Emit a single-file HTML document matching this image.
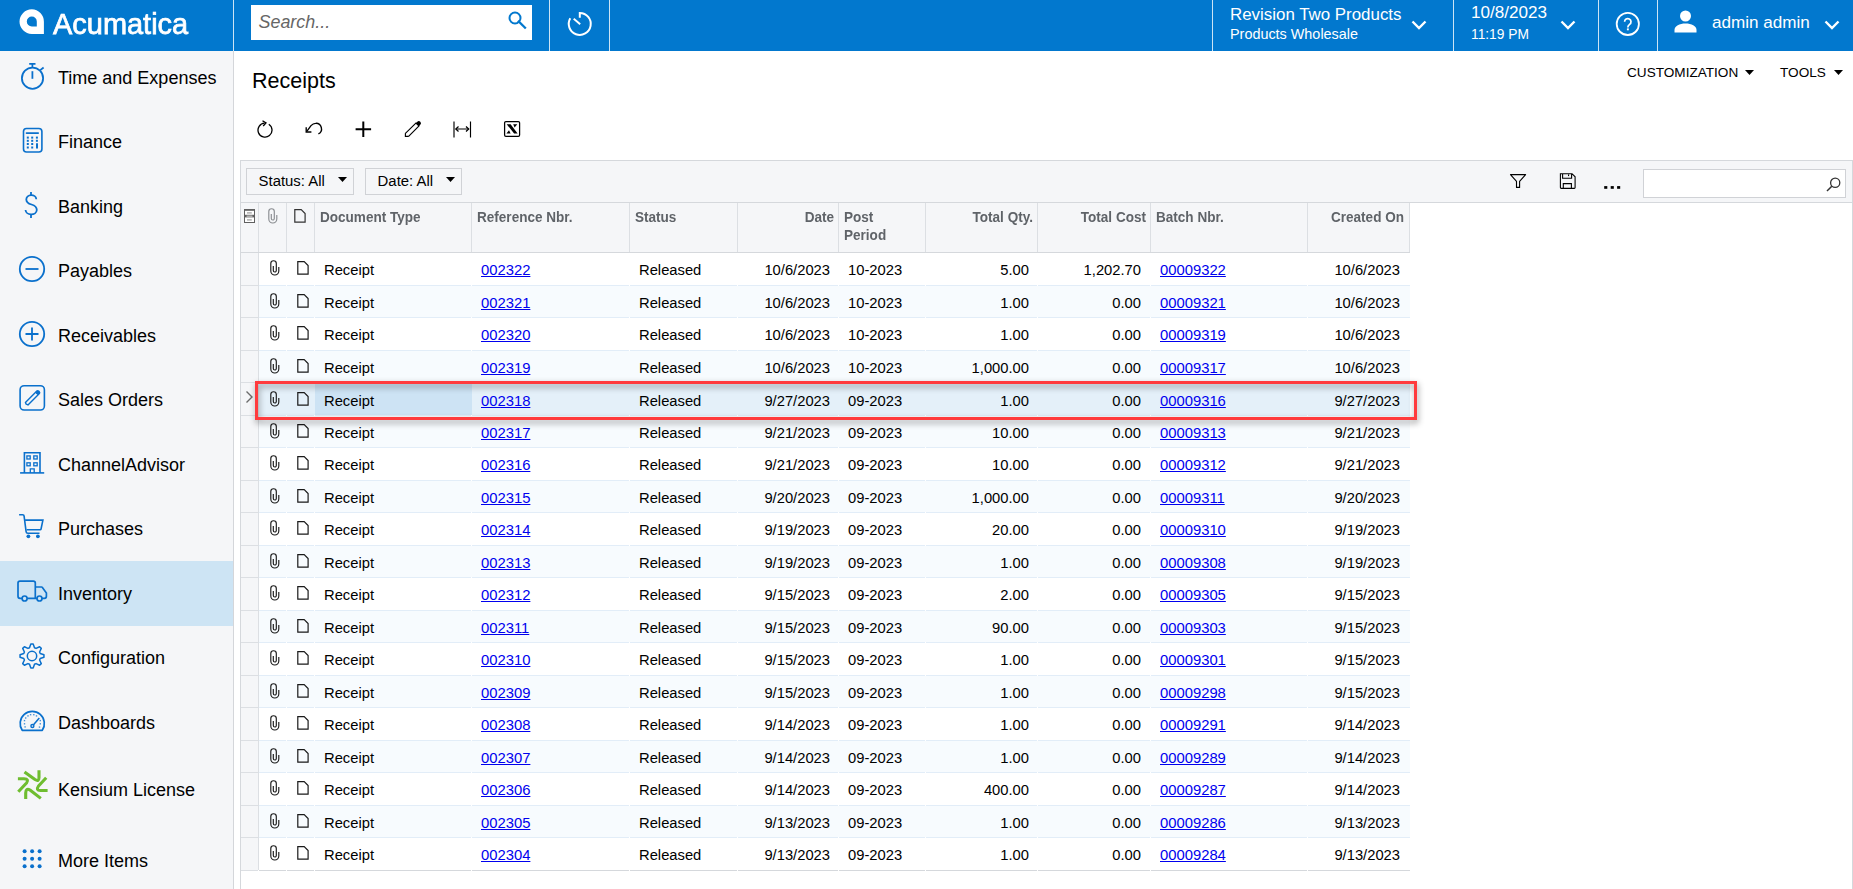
<!DOCTYPE html>
<html><head><meta charset="utf-8"><title>Receipts</title>
<style>
*{box-sizing:border-box;margin:0;padding:0}
html,body{width:1853px;height:889px;overflow:hidden;background:#fff;font-family:"Liberation Sans",sans-serif;color:#000}
.abs{position:absolute}
.t{position:absolute;white-space:nowrap;line-height:1}
.ic{position:absolute;display:block}
#hdr{position:absolute;left:0;top:0;width:1853px;height:51px;background:#0278ce}
.vd{position:absolute;top:0;width:1px;height:51px;background:rgba(255,255,255,.8)}
#sb{position:absolute;left:0;top:51px;width:233px;height:838px;background:#f5f6f8}
#sbb{position:absolute;left:233px;top:51px;width:1px;height:838px;background:#d4d6da}
.sbt{position:absolute;left:58px;font-size:18px;color:#000;white-space:nowrap;line-height:1}
.hl{position:absolute;left:0;top:561px;width:233px;height:65px;background:#cde4f4}
.gh{position:absolute;transform-origin:0 0;transform:scaleY(1.1);font-size:13.55px;font-weight:bold;color:#5f6368;white-space:nowrap;line-height:16.3px}
.cell{position:absolute;font-size:14.75px;white-space:nowrap;line-height:1}
.lnk{color:#0000ee;text-decoration:underline;font-size:14.8px}
.r{text-align:right}
</style></head><body>

<div id="hdr"></div>
<svg class="ic" style="left:19px;top:9px" width="26" height="26" viewBox="0 0 26 26">
<path d="M12.8 0.3A12.3 12.3 0 0 0 12.8 24.9H24.9V12.8A12.3 12.3 0 0 0 12.8 0.3ZM12.8 7.5A5 5 0 0 1 17.8 12.5V17.5H12.8A5 5 0 0 1 12.8 7.5Z" fill="#fff" fill-rule="evenodd"/></svg>
<div class="t" style="left:53px;top:8.6px;font-size:30px;font-weight:normal;color:#fff;-webkit-text-stroke:0.75px #fff;letter-spacing:0px;transform-origin:0 0;transform:scaleX(0.965)">Acumatica</div>
<div class="vd" style="left:233px"></div>
<div class="abs" style="left:251px;top:5px;width:281px;height:35px;background:#fff"></div>
<div class="t" style="left:258.5px;top:14px;font-size:17.9px;font-style:italic;color:#666">Search...</div>
<svg class="ic" style="left:507.4px;top:10.2px" width="20" height="20" viewBox="0 0 20 20"><circle cx="8" cy="8" r="5.5" fill="none" stroke="#0278ce" stroke-width="2"/><path d="M11.8 11.6l6.2 6.1" stroke="#0278ce" stroke-width="2.3" stroke-linecap="square"/></svg>
<div class="vd" style="left:549px"></div>
<svg class="ic" style="left:560px;top:5px" width="40" height="40" viewBox="0 0 40 40"><path d="M19.8 12.8V7.9A11 11 0 1 1 10.3 13.3" fill="none" stroke="#fff" stroke-width="2"/><path d="M13.7 13.7L20.2 19.3" stroke="#fff" stroke-width="1.9"/></svg>
<div class="vd" style="left:609px"></div>
<div class="vd" style="left:1212px"></div>
<div class="t" style="left:1230px;top:7px;font-size:16.9px;color:#fff">Revision Two Products</div>
<div class="t" style="left:1230px;top:27px;font-size:14.4px;color:#fff">Products Wholesale</div>
<svg class="ic" style="left:1411px;top:20px" width="16" height="10" viewBox="0 0 16 10"><path d="M1.5 1.5l6.5 6.5 6.5-6.5" fill="none" stroke="#fff" stroke-width="2.4"/></svg>
<div class="vd" style="left:1453px"></div>
<div class="t" style="left:1471px;top:4px;font-size:17.1px;color:#fff">10/8/2023</div>
<div class="t" style="left:1471px;top:27.5px;font-size:13.75px;color:#fff">11:19 PM</div>
<svg class="ic" style="left:1560px;top:20px" width="16" height="10" viewBox="0 0 16 10"><path d="M1.5 1.5l6.5 6.5 6.5-6.5" fill="none" stroke="#fff" stroke-width="2.4"/></svg>
<div class="vd" style="left:1598px"></div>
<svg class="ic" style="left:1608px;top:5px" width="40" height="40" viewBox="0 0 40 40"><circle cx="19.8" cy="18.9" r="11.1" fill="none" stroke="#fff" stroke-width="1.8"/><path d="M16.6 16.8A3.2 3.2 0 1 1 21.6 19.4C20.4 20.3 19.8 20.9 19.8 22.4" fill="none" stroke="#fff" stroke-width="1.7"/><rect x="18.9" y="23.4" width="1.9" height="1.9" fill="#fff"/></svg>
<div class="vd" style="left:1657px"></div>
<svg class="ic" style="left:1674px;top:10px" width="24" height="23" viewBox="0 0 24 23"><circle cx="11.5" cy="6" r="5.5" fill="#fff"/><path d="M0.5 22.5v-2.5c0-4 5-6.5 11-6.5s11 2.5 11 6.5v2.5z" fill="#fff"/></svg>
<div class="t" style="left:1712px;top:13.5px;font-size:17.1px;color:#fff">admin admin</div>
<svg class="ic" style="left:1824px;top:20px" width="16" height="10" viewBox="0 0 16 10"><path d="M1.5 1.5l6.5 6.5 6.5-6.5" fill="none" stroke="#fff" stroke-width="2.4"/></svg>
<div id="sb"></div><div id="sbb"></div>
<div class="hl"></div>
<div class="sbt" style="top:69.0px">Time and Expenses</div>
<div class="sbt" style="top:132.7px">Finance</div>
<div class="sbt" style="top:198.0px">Banking</div>
<div class="sbt" style="top:261.7px">Payables</div>
<div class="sbt" style="top:327.0px">Receivables</div>
<div class="sbt" style="top:390.7px">Sales Orders</div>
<div class="sbt" style="top:456.0px">ChannelAdvisor</div>
<div class="sbt" style="top:519.7px">Purchases</div>
<div class="sbt" style="top:584.7px">Inventory</div>
<div class="sbt" style="top:649.2px">Configuration</div>
<div class="sbt" style="top:713.7px">Dashboards</div>
<div class="sbt" style="top:780.7px">Kensium License</div>
<div class="sbt" style="top:851.7px">More Items</div>
<svg class="ic" style="left:19px;top:61px" width="28" height="30" viewBox="0 0 28 30"><circle cx="13.5" cy="17.2" r="10.6" fill="none" stroke="#0a70cc" stroke-width="1.8"/><path d="M13.4 10.2v7.6" stroke="#0a70cc" stroke-width="1.8"/><path d="M10.2 2.8h6.3M13.4 2.8v3.8" stroke="#0a70cc" stroke-width="1.7"/><path d="M21.3 9.1l3.3-2.6" stroke="#0a70cc" stroke-width="1.8"/></svg>
<svg class="ic" style="left:20px;top:125px" width="26" height="30" viewBox="0 0 26 30"><rect x="3.5" y="3.5" width="18.4" height="23.5" rx="3" fill="none" stroke="#0a70cc" stroke-width="1.6"/><path d="M6.5 8.1H18.2" stroke="#0a70cc" stroke-width="1.7" stroke-linecap="round"/><g fill="#0a70cc"><rect x="6.8" y="11.6" width="2" height="2"/><rect x="6.8" y="14.8" width="2" height="2"/><rect x="6.8" y="18" width="2" height="2"/><rect x="6.8" y="21.5" width="2" height="2"/><rect x="11.2" y="11.6" width="2" height="2"/><rect x="11.2" y="14.8" width="2" height="2"/><rect x="11.2" y="18" width="2" height="2"/><rect x="11.2" y="21.5" width="2" height="2"/><rect x="15.899999999999999" y="11.6" width="2" height="2"/><rect x="15.899999999999999" y="14.8" width="2" height="2"/><rect x="16" y="18" width="2" height="5.7" rx="1"/></g></svg>
<svg class="ic" style="left:20px;top:188px" width="22" height="34" viewBox="0 0 22 34"><path d="M11 4V7.5M11 26.5V30" stroke="#0a70cc" stroke-width="1.8"/><path d="M16.3 11.2A5.1 4.3 0 0 0 11.1 7.2A5 4.4 0 0 0 6.3 11.4C6.3 14.8 9 15.7 11.5 16.5C14.5 17.4 16.8 18.6 16.8 22A5.6 4.7 0 0 1 11 26.4A5.6 4.8 0 0 1 5.5 22" fill="none" stroke="#0a70cc" stroke-width="1.8"/></svg>
<svg class="ic" style="left:18px;top:255px" width="28" height="28" viewBox="0 0 28 28"><circle cx="14" cy="14" r="12.2" fill="none" stroke="#0a70cc" stroke-width="1.8"/><path d="M7.5 14h13" stroke="#0a70cc" stroke-width="1.8"/></svg>
<svg class="ic" style="left:18px;top:320px" width="28" height="28" viewBox="0 0 28 28"><circle cx="14" cy="14" r="12.2" fill="none" stroke="#0a70cc" stroke-width="1.8"/><path d="M7.5 14h13M14 7.5v13" stroke="#0a70cc" stroke-width="1.8"/></svg>
<svg class="ic" style="left:18px;top:384px" width="30" height="30" viewBox="0 0 30 30"><rect x="2.1" y="1.7" width="24.3" height="24.3" rx="4" fill="none" stroke="#0a70cc" stroke-width="1.6"/><g transform="translate(8.2 20.2) rotate(-45)"><path d="M0.7 -1.8H15.5V1.8H0.7L0 0Z" fill="none" stroke="#0a70cc" stroke-width="1.4" stroke-linejoin="round"/><rect x="14.5" y="-2.5" width="4.2" height="5" rx="2" fill="#0a70cc"/></g></svg>
<svg class="ic" style="left:14px;top:446px" width="34" height="30" viewBox="0 0 34 30"><path d="M6.1 26.9H30.2" stroke="#0a70cc" stroke-width="1.6"/><path d="M10.4 26.9V6.8H26V26.9" fill="none" stroke="#0a70cc" stroke-width="1.6"/><g fill="none" stroke="#0a70cc" stroke-width="1.3"><rect x="12.9" y="9.9" width="3.3" height="3.1"/><rect x="19.8" y="9.9" width="3.4" height="3.1"/><rect x="12.9" y="16.8" width="3.3" height="3"/><rect x="19.8" y="16.8" width="3.4" height="3"/><path d="M16.3 26.9V22.9H20.2V26.9"/></g></svg>
<svg class="ic" style="left:14px;top:508px" width="32" height="32" viewBox="0 0 32 32"><path d="M5.1 6.7H8.6A1.5 1.5 0 0 1 10.1 8.1L12.1 23.6A1.8 1.8 0 0 0 13.9 25.3H25.5" fill="none" stroke="#0a70cc" stroke-width="1.6"/><path d="M11.1 12.1H28.9L27 21.2A0.8 0.8 0 0 1 26.2 21.7H12.6" fill="none" stroke="#0a70cc" stroke-width="1.6"/><circle cx="14.4" cy="28.3" r="1.9" fill="#0a70cc"/><circle cx="23.9" cy="28.3" r="1.9" fill="#0a70cc"/></svg>
<svg class="ic" style="left:12px;top:574px" width="38" height="30" viewBox="0 0 38 30"><g fill="none" stroke="#0a70cc" stroke-width="1.7"><path d="M10.1 24.3H8A2 2 0 0 1 6 22.3V9.1A2 2 0 0 1 8 7.1H21.3A2 2 0 0 1 23.3 9.1V24.3M15.1 24.3H25M23.3 13H29.6A1 1 0 0 1 30.4 13.4L34.4 19V22.3A2 2 0 0 1 32.4 24.3H30"/><circle cx="12.6" cy="24.5" r="2.5"/><circle cx="27.5" cy="24.5" r="2.5"/></g></svg>
<svg class="ic" style="left:18px;top:642px" width="28" height="28" viewBox="0 0 28 28"><path d="M12.82 2.06 L15.18 2.06 L16.50 5.77 L18.05 6.42 L21.61 4.72 L23.28 6.39 L21.58 9.95 L22.23 11.50 L25.94 12.82 L25.94 15.18 L22.23 16.50 L21.58 18.05 L23.28 21.61 L21.61 23.28 L18.05 21.58 L16.50 22.23 L15.18 25.94 L12.82 25.94 L11.50 22.23 L9.95 21.58 L6.39 23.28 L4.72 21.61 L6.42 18.05 L5.77 16.50 L2.06 15.18 L2.06 12.82 L5.77 11.50 L6.42 9.95 L4.72 6.39 L6.39 4.72 L9.95 6.42 L11.50 5.77Z" fill="none" stroke="#0a70cc" stroke-width="1.5" stroke-linejoin="round"/><circle cx="14" cy="14" r="4.7" fill="none" stroke="#0a70cc" stroke-width="1.5"/></svg>
<svg class="ic" style="left:18px;top:708px" width="30" height="26" viewBox="0 0 30 26"><path d="M4.2 22.3A12.1 12.1 0 1 1 24.3 22.3Z" fill="none" stroke="#0a70cc" stroke-width="1.7" stroke-linejoin="round"/><path d="M15.3 16.9L21.3 10" stroke="#0a70cc" stroke-width="1.5"/><circle cx="14.4" cy="18" r="1.5" fill="none" stroke="#0a70cc" stroke-width="1.4"/><g fill="#0a70cc" opacity=".75"><rect x="5.8" y="11.9" width="1.4" height="1.4"/><rect x="5.8" y="15.1" width="1.4" height="1.4"/><rect x="6.4" y="18.2" width="1.4" height="1.4"/><rect x="7.0" y="9.3" width="1.4" height="1.4"/><rect x="9.3" y="7.2" width="1.4" height="1.4"/><rect x="11.9" y="6.0" width="1.4" height="1.4"/><rect x="15.1" y="6.0" width="1.4" height="1.4"/><rect x="17.8" y="7.2" width="1.4" height="1.4"/><rect x="21.6" y="11.9" width="1.4" height="1.4"/><rect x="21.6" y="15.1" width="1.4" height="1.4"/><rect x="20.8" y="18.4" width="1.4" height="1.4"/></g></svg>
<svg class="ic" style="left:12px;top:766px" width="40" height="40" viewBox="0 0 40 40"><g fill="none" stroke="#6fbd30" stroke-width="3.1" stroke-linejoin="round" stroke-linecap="butt"><path d="M12.5 5.9L23 13.5Q27 16 27 11.5V4.3"/><path d="M34.2 11.7L26.5 20Q23.5 24.5 28.5 24.5H35.6"/><path d="M28.8 32.4L18 24Q14 21.5 13.7 27V33"/><path d="M6.3 25.7L14.5 17Q17.5 13 12 12.7H5.9"/></g></svg>
<svg class="ic" style="left:20px;top:847px" width="26" height="26" viewBox="0 0 26 26"><circle cx="4.6" cy="4.25" r="2" fill="#0a70cc"/><circle cx="4.6" cy="11.73" r="2" fill="#0a70cc"/><circle cx="4.6" cy="19.21" r="2" fill="#0a70cc"/><circle cx="12.1" cy="4.25" r="2" fill="#0a70cc"/><circle cx="12.1" cy="11.73" r="2" fill="#0a70cc"/><circle cx="12.1" cy="19.21" r="2" fill="#0a70cc"/><circle cx="19.6" cy="4.25" r="2" fill="#0a70cc"/><circle cx="19.6" cy="11.73" r="2" fill="#0a70cc"/><circle cx="19.6" cy="19.21" r="2" fill="#0a70cc"/></svg>
<div class="t" style="left:252px;top:71px;font-size:21.5px;color:#000">Receipts</div>
<div class="t" style="left:1627px;top:66.4px;font-size:13.6px;color:#000">CUSTOMIZATION</div>
<svg class="ic" style="left:1745px;top:70px" width="9" height="5" viewBox="0 0 9 5"><path d="M0 0h9L4.5 5z" fill="#000"/></svg>
<div class="t" style="left:1780px;top:66.4px;font-size:13.6px;color:#000">TOOLS</div>
<svg class="ic" style="left:1834px;top:70px" width="9" height="5" viewBox="0 0 9 5"><path d="M0 0h9L4.5 5z" fill="#000"/></svg>
<svg class="ic" style="left:256px;top:120px" width="18" height="18" viewBox="0 0 18 18"><path d="M12.8 4.3A7 7 0 1 1 8.6 3.2" fill="none" stroke="#000" stroke-width="1.3"/><path d="M6.5 0.8l3.5 2.2-2.8 3" fill="none" stroke="#000" stroke-width="1.3"/></svg>
<svg class="ic" style="left:302px;top:116px" width="24" height="24" viewBox="0 0 24 24"><path d="M16.4 17.9A5.6 5.6 0 0 0 13.6 7.3C11.6 7.3 10.2 8.3 9 9.6L4.8 15.4" fill="none" stroke="#000" stroke-width="1.35"/><path d="M4.2 11.2V16H9.4" fill="none" stroke="#000" stroke-width="1.35"/></svg>
<svg class="ic" style="left:355px;top:121px" width="17" height="17" viewBox="0 0 17 17"><path d="M0.6 8.2h15.5M8.3 0.5v15.5" stroke="#000" stroke-width="2"/></svg>
<svg class="ic" style="left:400px;top:116px" width="24" height="24" viewBox="0 0 24 24"><path d="M5.4 17.3L16.4 6.6M8.6 20.4L19.3 9.6M5.4 17.3V20.4H8.6" fill="none" stroke="#000" stroke-width="1.15"/><path d="M15.6 7.4L17.3 5.8A2.1 2.1 0 0 1 20.3 8.8L18.6 10.4Z" fill="#000"/></svg>
<svg class="ic" style="left:452px;top:121px" width="20" height="17" viewBox="0 0 20 17"><path d="M2 0.5v16M18.5 0.5v16M4 8h12.5" stroke="#000" stroke-width="1.15"/><path d="M6.5 5.5L3.8 8l2.7 2.5M14 5.5L16.7 8 14 10.5" fill="none" stroke="#000" stroke-width="1.25"/></svg>
<svg class="ic" style="left:500px;top:118px" width="24" height="22" viewBox="0 0 24 22"><rect x="4.6" y="3.5" width="15" height="14.8" rx="1.3" fill="none" stroke="#000" stroke-width="1.25"/><path d="M6.7 6.2H10.6L17.6 15.6H14.1Z M13.2 6.2H17.3L14.6 9.4Z M6.4 15.6H10.6L9 12.3Z" fill="#000"/></svg>
<div class="abs" style="left:240px;top:160px;width:1613px;height:729px;border:1px solid #d5d8dc;border-bottom:none;background:#fff"></div>
<div class="abs" style="left:241px;top:161px;width:1611px;height:42px;background:#f5f6f8;border-bottom:1px solid #d5d8dc"></div>
<div class="abs" style="left:246px;top:168px;width:108px;height:27px;border:1px solid #d0d2d6;background:#f5f6f8"></div>
<div class="t" style="left:258.6px;top:174px;font-size:14.9px">Status: All</div>
<svg class="ic" style="left:338px;top:177px" width="9" height="5" viewBox="0 0 9 5"><path d="M0 0h9L4.5 5z" fill="#000"/></svg>
<div class="abs" style="left:365px;top:168px;width:97px;height:27px;border:1px solid #d0d2d6;background:#f5f6f8"></div>
<div class="t" style="left:377.6px;top:174px;font-size:14.9px">Date: All</div>
<svg class="ic" style="left:446px;top:177px" width="9" height="5" viewBox="0 0 9 5"><path d="M0 0h9L4.5 5z" fill="#000"/></svg>
<svg class="ic" style="left:1505px;top:168px" width="120" height="27" viewBox="0 0 120 27"><path d="M5.5 6.6H20.6L14.6 13.3V19.4H11.5V13.3Z" fill="none" stroke="#000" stroke-width="1.1" stroke-linejoin="round"/><path d="M55.4 5.7H67L70.1 8.8V19.6A0.8 0.8 0 0 1 69.3 20.4H56.2A0.8 0.8 0 0 1 55.4 19.6Z M57.6 5.7V10.2H66.6V5.7 M58.3 20.4V15.6H66.4V20.4" fill="none" stroke="#000" stroke-width="1.1"/><rect x="63" y="6.4" width="1.1" height="1.7" fill="#000"/><rect x="99.2" y="18.1" width="3.1" height="2.7" fill="#000"/><rect x="105.7" y="18.1" width="3.1" height="2.7" fill="#000"/><rect x="112.1" y="18.1" width="3.1" height="2.7" fill="#000"/></svg>
<div class="abs" style="left:1643px;top:169px;width:203px;height:29px;border:1px solid #d0d2d6;background:#fff"></div>
<svg class="ic" style="left:1826px;top:177px" width="15" height="15" viewBox="0 0 15 15"><circle cx="9.2" cy="5.8" r="4.6" fill="none" stroke="#333" stroke-width="1.3"/><path d="M5.8 9.2L1 14" stroke="#333" stroke-width="1.5"/></svg>
<div class="abs" style="left:241px;top:203px;width:1169px;height:50px;background:#f5f6f8;border-bottom:1px solid #d5d8dc"></div>
<div class="abs" style="left:258px;top:203px;width:1px;height:49px;background:#dcdfe3"></div>
<div class="abs" style="left:286px;top:203px;width:1px;height:49px;background:#dcdfe3"></div>
<div class="abs" style="left:314px;top:203px;width:1px;height:49px;background:#dcdfe3"></div>
<div class="abs" style="left:471px;top:203px;width:1px;height:49px;background:#dcdfe3"></div>
<div class="abs" style="left:629px;top:203px;width:1px;height:49px;background:#dcdfe3"></div>
<div class="abs" style="left:737px;top:203px;width:1px;height:49px;background:#dcdfe3"></div>
<div class="abs" style="left:838px;top:203px;width:1px;height:49px;background:#dcdfe3"></div>
<div class="abs" style="left:925px;top:203px;width:1px;height:49px;background:#dcdfe3"></div>
<div class="abs" style="left:1037px;top:203px;width:1px;height:49px;background:#dcdfe3"></div>
<div class="abs" style="left:1150px;top:203px;width:1px;height:49px;background:#dcdfe3"></div>
<div class="abs" style="left:1307px;top:203px;width:1px;height:49px;background:#dcdfe3"></div>
<div class="abs" style="left:1409px;top:203px;width:1px;height:49px;background:#dcdfe3"></div>
<svg class="ic" style="left:244px;top:209px" width="11" height="14" viewBox="0 0 11 14"><rect x="0.5" y="0.5" width="10" height="13" fill="#fff" stroke="#606060" stroke-width="1"/><rect x="0" y="0" width="11" height="1.8" fill="#606060"/><rect x="0" y="5.8" width="11" height="2.6" fill="#606060"/><rect x="2.5" y="6.7" width="6" height="0.8" fill="#fff"/><rect x="3" y="3.2" width="4.8" height="1.4" fill="#aaa"/><rect x="3" y="10.2" width="4.8" height="1.4" fill="#aaa"/></svg>
<svg class="ic" style="left:262px;top:204px" width="20" height="26" viewBox="0 0 20 26"><path d="M14.8 11V15A4 4 0 0 1 6.8 15V7.5A2.75 2.75 0 0 1 12.3 7.5V14.5A1.5 1.5 0 0 1 9.3 14.5V10" fill="none" stroke="#8a8d91" stroke-width="1.15"/></svg>
<svg class="ic" style="left:291px;top:204px" width="20" height="26" viewBox="0 0 20 26"><path d="M3.8 5.6H10.2L14.1 9.5V18.1H3.8Z" fill="none" stroke="#333" stroke-width="1.2"/></svg>
<div class="gh" style="left:320px;top:208.5px">Document Type</div>
<div class="gh" style="left:477px;top:208.5px">Reference Nbr.</div>
<div class="gh" style="left:635px;top:208.5px">Status</div>
<div class="gh r" style="right:1019px;top:208.5px">Date</div>
<div class="gh" style="left:844px;top:208.5px">Post<br>Period</div>
<div class="gh r" style="right:820px;top:208.5px">Total Qty.</div>
<div class="gh r" style="right:707px;top:208.5px">Total Cost</div>
<div class="gh" style="left:1156px;top:208.5px">Batch Nbr.</div>
<div class="gh r" style="right:449px;top:208.5px">Created On</div>
<div class="abs" style="left:241px;top:253px;width:17px;height:617px;background:#f5f6f8"></div>
<div class="abs" style="left:258px;top:253px;width:1px;height:617px;background:#dcdfe3"></div>
<div class="abs" style="left:259px;top:253px;width:1151px;height:32px;background:#ffffff"></div>
<div class="abs" style="left:259px;top:285px;width:27px;height:1px;background:#e2edf8"></div>
<div class="abs" style="left:287px;top:285px;width:27px;height:1px;background:#e2edf8"></div>
<div class="abs" style="left:315px;top:285px;width:156px;height:1px;background:#e2edf8"></div>
<div class="abs" style="left:472px;top:285px;width:157px;height:1px;background:#e2edf8"></div>
<div class="abs" style="left:630px;top:285px;width:107px;height:1px;background:#e2edf8"></div>
<div class="abs" style="left:738px;top:285px;width:100px;height:1px;background:#e2edf8"></div>
<div class="abs" style="left:839px;top:285px;width:86px;height:1px;background:#e2edf8"></div>
<div class="abs" style="left:926px;top:285px;width:111px;height:1px;background:#e2edf8"></div>
<div class="abs" style="left:1038px;top:285px;width:112px;height:1px;background:#e2edf8"></div>
<div class="abs" style="left:1151px;top:285px;width:156px;height:1px;background:#e2edf8"></div>
<div class="abs" style="left:1308px;top:285px;width:102px;height:1px;background:#e2edf8"></div>
<div class="abs" style="left:241px;top:285px;width:17px;height:1px;background:#dcdfe3"></div>
<svg class="ic" style="left:264px;top:256px" width="20" height="26" viewBox="0 0 20 26"><path d="M14.8 11V15A4 4 0 0 1 6.8 15V7.5A2.75 2.75 0 0 1 12.3 7.5V14.5A1.5 1.5 0 0 1 9.3 14.5V10" fill="none" stroke="#1a1a1a" stroke-width="1.15"/></svg>
<svg class="ic" style="left:294px;top:256px" width="20" height="26" viewBox="0 0 20 26"><path d="M3.8 5.6H10.2L14.1 9.5V18.1H3.8Z" fill="none" stroke="#1a1a1a" stroke-width="1.2"/></svg>
<div class="cell" style="left:324px;top:262.6px">Receipt</div>
<div class="cell lnk" style="left:481px;top:262.6px">002322</div>
<div class="cell" style="left:639px;top:262.6px">Released</div>
<div class="cell r" style="right:1023px;top:262.6px">10/6/2023</div>
<div class="cell" style="left:848px;top:262.6px">10-2023</div>
<div class="cell r" style="right:824px;top:262.6px">5.00</div>
<div class="cell r" style="right:712px;top:262.6px">1,202.70</div>
<div class="cell lnk" style="left:1160px;top:262.6px">00009322</div>
<div class="cell r" style="right:453px;top:262.6px">10/6/2023</div>
<div class="abs" style="left:259px;top:286px;width:1151px;height:31px;background:#f7fbfe"></div>
<div class="abs" style="left:259px;top:317px;width:27px;height:1px;background:#e2edf8"></div>
<div class="abs" style="left:287px;top:317px;width:27px;height:1px;background:#e2edf8"></div>
<div class="abs" style="left:315px;top:317px;width:156px;height:1px;background:#e2edf8"></div>
<div class="abs" style="left:472px;top:317px;width:157px;height:1px;background:#e2edf8"></div>
<div class="abs" style="left:630px;top:317px;width:107px;height:1px;background:#e2edf8"></div>
<div class="abs" style="left:738px;top:317px;width:100px;height:1px;background:#e2edf8"></div>
<div class="abs" style="left:839px;top:317px;width:86px;height:1px;background:#e2edf8"></div>
<div class="abs" style="left:926px;top:317px;width:111px;height:1px;background:#e2edf8"></div>
<div class="abs" style="left:1038px;top:317px;width:112px;height:1px;background:#e2edf8"></div>
<div class="abs" style="left:1151px;top:317px;width:156px;height:1px;background:#e2edf8"></div>
<div class="abs" style="left:1308px;top:317px;width:102px;height:1px;background:#e2edf8"></div>
<div class="abs" style="left:241px;top:317px;width:17px;height:1px;background:#dcdfe3"></div>
<svg class="ic" style="left:264px;top:289px" width="20" height="26" viewBox="0 0 20 26"><path d="M14.8 11V15A4 4 0 0 1 6.8 15V7.5A2.75 2.75 0 0 1 12.3 7.5V14.5A1.5 1.5 0 0 1 9.3 14.5V10" fill="none" stroke="#1a1a1a" stroke-width="1.15"/></svg>
<svg class="ic" style="left:294px;top:289px" width="20" height="26" viewBox="0 0 20 26"><path d="M3.8 5.6H10.2L14.1 9.5V18.1H3.8Z" fill="none" stroke="#1a1a1a" stroke-width="1.2"/></svg>
<div class="cell" style="left:324px;top:295.6px">Receipt</div>
<div class="cell lnk" style="left:481px;top:295.6px">002321</div>
<div class="cell" style="left:639px;top:295.6px">Released</div>
<div class="cell r" style="right:1023px;top:295.6px">10/6/2023</div>
<div class="cell" style="left:848px;top:295.6px">10-2023</div>
<div class="cell r" style="right:824px;top:295.6px">1.00</div>
<div class="cell r" style="right:712px;top:295.6px">0.00</div>
<div class="cell lnk" style="left:1160px;top:295.6px">00009321</div>
<div class="cell r" style="right:453px;top:295.6px">10/6/2023</div>
<div class="abs" style="left:259px;top:318px;width:1151px;height:32px;background:#ffffff"></div>
<div class="abs" style="left:259px;top:350px;width:27px;height:1px;background:#e2edf8"></div>
<div class="abs" style="left:287px;top:350px;width:27px;height:1px;background:#e2edf8"></div>
<div class="abs" style="left:315px;top:350px;width:156px;height:1px;background:#e2edf8"></div>
<div class="abs" style="left:472px;top:350px;width:157px;height:1px;background:#e2edf8"></div>
<div class="abs" style="left:630px;top:350px;width:107px;height:1px;background:#e2edf8"></div>
<div class="abs" style="left:738px;top:350px;width:100px;height:1px;background:#e2edf8"></div>
<div class="abs" style="left:839px;top:350px;width:86px;height:1px;background:#e2edf8"></div>
<div class="abs" style="left:926px;top:350px;width:111px;height:1px;background:#e2edf8"></div>
<div class="abs" style="left:1038px;top:350px;width:112px;height:1px;background:#e2edf8"></div>
<div class="abs" style="left:1151px;top:350px;width:156px;height:1px;background:#e2edf8"></div>
<div class="abs" style="left:1308px;top:350px;width:102px;height:1px;background:#e2edf8"></div>
<div class="abs" style="left:241px;top:350px;width:17px;height:1px;background:#dcdfe3"></div>
<svg class="ic" style="left:264px;top:321px" width="20" height="26" viewBox="0 0 20 26"><path d="M14.8 11V15A4 4 0 0 1 6.8 15V7.5A2.75 2.75 0 0 1 12.3 7.5V14.5A1.5 1.5 0 0 1 9.3 14.5V10" fill="none" stroke="#1a1a1a" stroke-width="1.15"/></svg>
<svg class="ic" style="left:294px;top:321px" width="20" height="26" viewBox="0 0 20 26"><path d="M3.8 5.6H10.2L14.1 9.5V18.1H3.8Z" fill="none" stroke="#1a1a1a" stroke-width="1.2"/></svg>
<div class="cell" style="left:324px;top:327.6px">Receipt</div>
<div class="cell lnk" style="left:481px;top:327.6px">002320</div>
<div class="cell" style="left:639px;top:327.6px">Released</div>
<div class="cell r" style="right:1023px;top:327.6px">10/6/2023</div>
<div class="cell" style="left:848px;top:327.6px">10-2023</div>
<div class="cell r" style="right:824px;top:327.6px">1.00</div>
<div class="cell r" style="right:712px;top:327.6px">0.00</div>
<div class="cell lnk" style="left:1160px;top:327.6px">00009319</div>
<div class="cell r" style="right:453px;top:327.6px">10/6/2023</div>
<div class="abs" style="left:259px;top:351px;width:1151px;height:31px;background:#f7fbfe"></div>
<div class="abs" style="left:259px;top:382px;width:27px;height:1px;background:#e2edf8"></div>
<div class="abs" style="left:287px;top:382px;width:27px;height:1px;background:#e2edf8"></div>
<div class="abs" style="left:315px;top:382px;width:156px;height:1px;background:#e2edf8"></div>
<div class="abs" style="left:472px;top:382px;width:157px;height:1px;background:#e2edf8"></div>
<div class="abs" style="left:630px;top:382px;width:107px;height:1px;background:#e2edf8"></div>
<div class="abs" style="left:738px;top:382px;width:100px;height:1px;background:#e2edf8"></div>
<div class="abs" style="left:839px;top:382px;width:86px;height:1px;background:#e2edf8"></div>
<div class="abs" style="left:926px;top:382px;width:111px;height:1px;background:#e2edf8"></div>
<div class="abs" style="left:1038px;top:382px;width:112px;height:1px;background:#e2edf8"></div>
<div class="abs" style="left:1151px;top:382px;width:156px;height:1px;background:#e2edf8"></div>
<div class="abs" style="left:1308px;top:382px;width:102px;height:1px;background:#e2edf8"></div>
<div class="abs" style="left:241px;top:382px;width:17px;height:1px;background:#dcdfe3"></div>
<svg class="ic" style="left:264px;top:354px" width="20" height="26" viewBox="0 0 20 26"><path d="M14.8 11V15A4 4 0 0 1 6.8 15V7.5A2.75 2.75 0 0 1 12.3 7.5V14.5A1.5 1.5 0 0 1 9.3 14.5V10" fill="none" stroke="#1a1a1a" stroke-width="1.15"/></svg>
<svg class="ic" style="left:294px;top:354px" width="20" height="26" viewBox="0 0 20 26"><path d="M3.8 5.6H10.2L14.1 9.5V18.1H3.8Z" fill="none" stroke="#1a1a1a" stroke-width="1.2"/></svg>
<div class="cell" style="left:324px;top:360.6px">Receipt</div>
<div class="cell lnk" style="left:481px;top:360.6px">002319</div>
<div class="cell" style="left:639px;top:360.6px">Released</div>
<div class="cell r" style="right:1023px;top:360.6px">10/6/2023</div>
<div class="cell" style="left:848px;top:360.6px">10-2023</div>
<div class="cell r" style="right:824px;top:360.6px">1,000.00</div>
<div class="cell r" style="right:712px;top:360.6px">0.00</div>
<div class="cell lnk" style="left:1160px;top:360.6px">00009317</div>
<div class="cell r" style="right:453px;top:360.6px">10/6/2023</div>
<div class="abs" style="left:259px;top:383px;width:1151px;height:32px;background:#e4f0f9"></div>
<div class="abs" style="left:259px;top:415px;width:27px;height:1px;background:#e2edf8"></div>
<div class="abs" style="left:287px;top:415px;width:27px;height:1px;background:#e2edf8"></div>
<div class="abs" style="left:315px;top:415px;width:156px;height:1px;background:#e2edf8"></div>
<div class="abs" style="left:472px;top:415px;width:157px;height:1px;background:#e2edf8"></div>
<div class="abs" style="left:630px;top:415px;width:107px;height:1px;background:#e2edf8"></div>
<div class="abs" style="left:738px;top:415px;width:100px;height:1px;background:#e2edf8"></div>
<div class="abs" style="left:839px;top:415px;width:86px;height:1px;background:#e2edf8"></div>
<div class="abs" style="left:926px;top:415px;width:111px;height:1px;background:#e2edf8"></div>
<div class="abs" style="left:1038px;top:415px;width:112px;height:1px;background:#e2edf8"></div>
<div class="abs" style="left:1151px;top:415px;width:156px;height:1px;background:#e2edf8"></div>
<div class="abs" style="left:1308px;top:415px;width:102px;height:1px;background:#e2edf8"></div>
<div class="abs" style="left:241px;top:415px;width:17px;height:1px;background:#dcdfe3"></div>
<div class="abs" style="left:315px;top:383px;width:157px;height:32px;background:#cde3f4"></div>
<svg class="ic" style="left:245px;top:390px" width="9" height="14" viewBox="0 0 9 14"><path d="M1.5 1.5l5.5 5.5-5.5 5.5" fill="none" stroke="#6b6b6b" stroke-width="1.4"/></svg>
<svg class="ic" style="left:264px;top:387px" width="20" height="26" viewBox="0 0 20 26"><path d="M14.8 11V15A4 4 0 0 1 6.8 15V7.5A2.75 2.75 0 0 1 12.3 7.5V14.5A1.5 1.5 0 0 1 9.3 14.5V10" fill="none" stroke="#1a1a1a" stroke-width="1.15"/></svg>
<svg class="ic" style="left:294px;top:387px" width="20" height="26" viewBox="0 0 20 26"><path d="M3.8 5.6H10.2L14.1 9.5V18.1H3.8Z" fill="none" stroke="#1a1a1a" stroke-width="1.2"/></svg>
<div class="cell" style="left:324px;top:393.6px">Receipt</div>
<div class="cell lnk" style="left:481px;top:393.6px">002318</div>
<div class="cell" style="left:639px;top:393.6px">Released</div>
<div class="cell r" style="right:1023px;top:393.6px">9/27/2023</div>
<div class="cell" style="left:848px;top:393.6px">09-2023</div>
<div class="cell r" style="right:824px;top:393.6px">1.00</div>
<div class="cell r" style="right:712px;top:393.6px">0.00</div>
<div class="cell lnk" style="left:1160px;top:393.6px">00009316</div>
<div class="cell r" style="right:453px;top:393.6px">9/27/2023</div>
<div class="abs" style="left:259px;top:416px;width:1151px;height:31px;background:#f7fbfe"></div>
<div class="abs" style="left:259px;top:447px;width:27px;height:1px;background:#e2edf8"></div>
<div class="abs" style="left:287px;top:447px;width:27px;height:1px;background:#e2edf8"></div>
<div class="abs" style="left:315px;top:447px;width:156px;height:1px;background:#e2edf8"></div>
<div class="abs" style="left:472px;top:447px;width:157px;height:1px;background:#e2edf8"></div>
<div class="abs" style="left:630px;top:447px;width:107px;height:1px;background:#e2edf8"></div>
<div class="abs" style="left:738px;top:447px;width:100px;height:1px;background:#e2edf8"></div>
<div class="abs" style="left:839px;top:447px;width:86px;height:1px;background:#e2edf8"></div>
<div class="abs" style="left:926px;top:447px;width:111px;height:1px;background:#e2edf8"></div>
<div class="abs" style="left:1038px;top:447px;width:112px;height:1px;background:#e2edf8"></div>
<div class="abs" style="left:1151px;top:447px;width:156px;height:1px;background:#e2edf8"></div>
<div class="abs" style="left:1308px;top:447px;width:102px;height:1px;background:#e2edf8"></div>
<div class="abs" style="left:241px;top:447px;width:17px;height:1px;background:#dcdfe3"></div>
<svg class="ic" style="left:264px;top:419px" width="20" height="26" viewBox="0 0 20 26"><path d="M14.8 11V15A4 4 0 0 1 6.8 15V7.5A2.75 2.75 0 0 1 12.3 7.5V14.5A1.5 1.5 0 0 1 9.3 14.5V10" fill="none" stroke="#1a1a1a" stroke-width="1.15"/></svg>
<svg class="ic" style="left:294px;top:419px" width="20" height="26" viewBox="0 0 20 26"><path d="M3.8 5.6H10.2L14.1 9.5V18.1H3.8Z" fill="none" stroke="#1a1a1a" stroke-width="1.2"/></svg>
<div class="cell" style="left:324px;top:425.6px">Receipt</div>
<div class="cell lnk" style="left:481px;top:425.6px">002317</div>
<div class="cell" style="left:639px;top:425.6px">Released</div>
<div class="cell r" style="right:1023px;top:425.6px">9/21/2023</div>
<div class="cell" style="left:848px;top:425.6px">09-2023</div>
<div class="cell r" style="right:824px;top:425.6px">10.00</div>
<div class="cell r" style="right:712px;top:425.6px">0.00</div>
<div class="cell lnk" style="left:1160px;top:425.6px">00009313</div>
<div class="cell r" style="right:453px;top:425.6px">9/21/2023</div>
<div class="abs" style="left:259px;top:448px;width:1151px;height:32px;background:#ffffff"></div>
<div class="abs" style="left:259px;top:480px;width:27px;height:1px;background:#e2edf8"></div>
<div class="abs" style="left:287px;top:480px;width:27px;height:1px;background:#e2edf8"></div>
<div class="abs" style="left:315px;top:480px;width:156px;height:1px;background:#e2edf8"></div>
<div class="abs" style="left:472px;top:480px;width:157px;height:1px;background:#e2edf8"></div>
<div class="abs" style="left:630px;top:480px;width:107px;height:1px;background:#e2edf8"></div>
<div class="abs" style="left:738px;top:480px;width:100px;height:1px;background:#e2edf8"></div>
<div class="abs" style="left:839px;top:480px;width:86px;height:1px;background:#e2edf8"></div>
<div class="abs" style="left:926px;top:480px;width:111px;height:1px;background:#e2edf8"></div>
<div class="abs" style="left:1038px;top:480px;width:112px;height:1px;background:#e2edf8"></div>
<div class="abs" style="left:1151px;top:480px;width:156px;height:1px;background:#e2edf8"></div>
<div class="abs" style="left:1308px;top:480px;width:102px;height:1px;background:#e2edf8"></div>
<div class="abs" style="left:241px;top:480px;width:17px;height:1px;background:#dcdfe3"></div>
<svg class="ic" style="left:264px;top:451px" width="20" height="26" viewBox="0 0 20 26"><path d="M14.8 11V15A4 4 0 0 1 6.8 15V7.5A2.75 2.75 0 0 1 12.3 7.5V14.5A1.5 1.5 0 0 1 9.3 14.5V10" fill="none" stroke="#1a1a1a" stroke-width="1.15"/></svg>
<svg class="ic" style="left:294px;top:451px" width="20" height="26" viewBox="0 0 20 26"><path d="M3.8 5.6H10.2L14.1 9.5V18.1H3.8Z" fill="none" stroke="#1a1a1a" stroke-width="1.2"/></svg>
<div class="cell" style="left:324px;top:457.6px">Receipt</div>
<div class="cell lnk" style="left:481px;top:457.6px">002316</div>
<div class="cell" style="left:639px;top:457.6px">Released</div>
<div class="cell r" style="right:1023px;top:457.6px">9/21/2023</div>
<div class="cell" style="left:848px;top:457.6px">09-2023</div>
<div class="cell r" style="right:824px;top:457.6px">10.00</div>
<div class="cell r" style="right:712px;top:457.6px">0.00</div>
<div class="cell lnk" style="left:1160px;top:457.6px">00009312</div>
<div class="cell r" style="right:453px;top:457.6px">9/21/2023</div>
<div class="abs" style="left:259px;top:481px;width:1151px;height:31px;background:#f7fbfe"></div>
<div class="abs" style="left:259px;top:512px;width:27px;height:1px;background:#e2edf8"></div>
<div class="abs" style="left:287px;top:512px;width:27px;height:1px;background:#e2edf8"></div>
<div class="abs" style="left:315px;top:512px;width:156px;height:1px;background:#e2edf8"></div>
<div class="abs" style="left:472px;top:512px;width:157px;height:1px;background:#e2edf8"></div>
<div class="abs" style="left:630px;top:512px;width:107px;height:1px;background:#e2edf8"></div>
<div class="abs" style="left:738px;top:512px;width:100px;height:1px;background:#e2edf8"></div>
<div class="abs" style="left:839px;top:512px;width:86px;height:1px;background:#e2edf8"></div>
<div class="abs" style="left:926px;top:512px;width:111px;height:1px;background:#e2edf8"></div>
<div class="abs" style="left:1038px;top:512px;width:112px;height:1px;background:#e2edf8"></div>
<div class="abs" style="left:1151px;top:512px;width:156px;height:1px;background:#e2edf8"></div>
<div class="abs" style="left:1308px;top:512px;width:102px;height:1px;background:#e2edf8"></div>
<div class="abs" style="left:241px;top:512px;width:17px;height:1px;background:#dcdfe3"></div>
<svg class="ic" style="left:264px;top:484px" width="20" height="26" viewBox="0 0 20 26"><path d="M14.8 11V15A4 4 0 0 1 6.8 15V7.5A2.75 2.75 0 0 1 12.3 7.5V14.5A1.5 1.5 0 0 1 9.3 14.5V10" fill="none" stroke="#1a1a1a" stroke-width="1.15"/></svg>
<svg class="ic" style="left:294px;top:484px" width="20" height="26" viewBox="0 0 20 26"><path d="M3.8 5.6H10.2L14.1 9.5V18.1H3.8Z" fill="none" stroke="#1a1a1a" stroke-width="1.2"/></svg>
<div class="cell" style="left:324px;top:490.6px">Receipt</div>
<div class="cell lnk" style="left:481px;top:490.6px">002315</div>
<div class="cell" style="left:639px;top:490.6px">Released</div>
<div class="cell r" style="right:1023px;top:490.6px">9/20/2023</div>
<div class="cell" style="left:848px;top:490.6px">09-2023</div>
<div class="cell r" style="right:824px;top:490.6px">1,000.00</div>
<div class="cell r" style="right:712px;top:490.6px">0.00</div>
<div class="cell lnk" style="left:1160px;top:490.6px">00009311</div>
<div class="cell r" style="right:453px;top:490.6px">9/20/2023</div>
<div class="abs" style="left:259px;top:513px;width:1151px;height:32px;background:#ffffff"></div>
<div class="abs" style="left:259px;top:545px;width:27px;height:1px;background:#e2edf8"></div>
<div class="abs" style="left:287px;top:545px;width:27px;height:1px;background:#e2edf8"></div>
<div class="abs" style="left:315px;top:545px;width:156px;height:1px;background:#e2edf8"></div>
<div class="abs" style="left:472px;top:545px;width:157px;height:1px;background:#e2edf8"></div>
<div class="abs" style="left:630px;top:545px;width:107px;height:1px;background:#e2edf8"></div>
<div class="abs" style="left:738px;top:545px;width:100px;height:1px;background:#e2edf8"></div>
<div class="abs" style="left:839px;top:545px;width:86px;height:1px;background:#e2edf8"></div>
<div class="abs" style="left:926px;top:545px;width:111px;height:1px;background:#e2edf8"></div>
<div class="abs" style="left:1038px;top:545px;width:112px;height:1px;background:#e2edf8"></div>
<div class="abs" style="left:1151px;top:545px;width:156px;height:1px;background:#e2edf8"></div>
<div class="abs" style="left:1308px;top:545px;width:102px;height:1px;background:#e2edf8"></div>
<div class="abs" style="left:241px;top:545px;width:17px;height:1px;background:#dcdfe3"></div>
<svg class="ic" style="left:264px;top:516px" width="20" height="26" viewBox="0 0 20 26"><path d="M14.8 11V15A4 4 0 0 1 6.8 15V7.5A2.75 2.75 0 0 1 12.3 7.5V14.5A1.5 1.5 0 0 1 9.3 14.5V10" fill="none" stroke="#1a1a1a" stroke-width="1.15"/></svg>
<svg class="ic" style="left:294px;top:516px" width="20" height="26" viewBox="0 0 20 26"><path d="M3.8 5.6H10.2L14.1 9.5V18.1H3.8Z" fill="none" stroke="#1a1a1a" stroke-width="1.2"/></svg>
<div class="cell" style="left:324px;top:522.6px">Receipt</div>
<div class="cell lnk" style="left:481px;top:522.6px">002314</div>
<div class="cell" style="left:639px;top:522.6px">Released</div>
<div class="cell r" style="right:1023px;top:522.6px">9/19/2023</div>
<div class="cell" style="left:848px;top:522.6px">09-2023</div>
<div class="cell r" style="right:824px;top:522.6px">20.00</div>
<div class="cell r" style="right:712px;top:522.6px">0.00</div>
<div class="cell lnk" style="left:1160px;top:522.6px">00009310</div>
<div class="cell r" style="right:453px;top:522.6px">9/19/2023</div>
<div class="abs" style="left:259px;top:546px;width:1151px;height:31px;background:#f7fbfe"></div>
<div class="abs" style="left:259px;top:577px;width:27px;height:1px;background:#e2edf8"></div>
<div class="abs" style="left:287px;top:577px;width:27px;height:1px;background:#e2edf8"></div>
<div class="abs" style="left:315px;top:577px;width:156px;height:1px;background:#e2edf8"></div>
<div class="abs" style="left:472px;top:577px;width:157px;height:1px;background:#e2edf8"></div>
<div class="abs" style="left:630px;top:577px;width:107px;height:1px;background:#e2edf8"></div>
<div class="abs" style="left:738px;top:577px;width:100px;height:1px;background:#e2edf8"></div>
<div class="abs" style="left:839px;top:577px;width:86px;height:1px;background:#e2edf8"></div>
<div class="abs" style="left:926px;top:577px;width:111px;height:1px;background:#e2edf8"></div>
<div class="abs" style="left:1038px;top:577px;width:112px;height:1px;background:#e2edf8"></div>
<div class="abs" style="left:1151px;top:577px;width:156px;height:1px;background:#e2edf8"></div>
<div class="abs" style="left:1308px;top:577px;width:102px;height:1px;background:#e2edf8"></div>
<div class="abs" style="left:241px;top:577px;width:17px;height:1px;background:#dcdfe3"></div>
<svg class="ic" style="left:264px;top:549px" width="20" height="26" viewBox="0 0 20 26"><path d="M14.8 11V15A4 4 0 0 1 6.8 15V7.5A2.75 2.75 0 0 1 12.3 7.5V14.5A1.5 1.5 0 0 1 9.3 14.5V10" fill="none" stroke="#1a1a1a" stroke-width="1.15"/></svg>
<svg class="ic" style="left:294px;top:549px" width="20" height="26" viewBox="0 0 20 26"><path d="M3.8 5.6H10.2L14.1 9.5V18.1H3.8Z" fill="none" stroke="#1a1a1a" stroke-width="1.2"/></svg>
<div class="cell" style="left:324px;top:555.6px">Receipt</div>
<div class="cell lnk" style="left:481px;top:555.6px">002313</div>
<div class="cell" style="left:639px;top:555.6px">Released</div>
<div class="cell r" style="right:1023px;top:555.6px">9/19/2023</div>
<div class="cell" style="left:848px;top:555.6px">09-2023</div>
<div class="cell r" style="right:824px;top:555.6px">1.00</div>
<div class="cell r" style="right:712px;top:555.6px">0.00</div>
<div class="cell lnk" style="left:1160px;top:555.6px">00009308</div>
<div class="cell r" style="right:453px;top:555.6px">9/19/2023</div>
<div class="abs" style="left:259px;top:578px;width:1151px;height:32px;background:#ffffff"></div>
<div class="abs" style="left:259px;top:610px;width:27px;height:1px;background:#e2edf8"></div>
<div class="abs" style="left:287px;top:610px;width:27px;height:1px;background:#e2edf8"></div>
<div class="abs" style="left:315px;top:610px;width:156px;height:1px;background:#e2edf8"></div>
<div class="abs" style="left:472px;top:610px;width:157px;height:1px;background:#e2edf8"></div>
<div class="abs" style="left:630px;top:610px;width:107px;height:1px;background:#e2edf8"></div>
<div class="abs" style="left:738px;top:610px;width:100px;height:1px;background:#e2edf8"></div>
<div class="abs" style="left:839px;top:610px;width:86px;height:1px;background:#e2edf8"></div>
<div class="abs" style="left:926px;top:610px;width:111px;height:1px;background:#e2edf8"></div>
<div class="abs" style="left:1038px;top:610px;width:112px;height:1px;background:#e2edf8"></div>
<div class="abs" style="left:1151px;top:610px;width:156px;height:1px;background:#e2edf8"></div>
<div class="abs" style="left:1308px;top:610px;width:102px;height:1px;background:#e2edf8"></div>
<div class="abs" style="left:241px;top:610px;width:17px;height:1px;background:#dcdfe3"></div>
<svg class="ic" style="left:264px;top:581px" width="20" height="26" viewBox="0 0 20 26"><path d="M14.8 11V15A4 4 0 0 1 6.8 15V7.5A2.75 2.75 0 0 1 12.3 7.5V14.5A1.5 1.5 0 0 1 9.3 14.5V10" fill="none" stroke="#1a1a1a" stroke-width="1.15"/></svg>
<svg class="ic" style="left:294px;top:581px" width="20" height="26" viewBox="0 0 20 26"><path d="M3.8 5.6H10.2L14.1 9.5V18.1H3.8Z" fill="none" stroke="#1a1a1a" stroke-width="1.2"/></svg>
<div class="cell" style="left:324px;top:587.6px">Receipt</div>
<div class="cell lnk" style="left:481px;top:587.6px">002312</div>
<div class="cell" style="left:639px;top:587.6px">Released</div>
<div class="cell r" style="right:1023px;top:587.6px">9/15/2023</div>
<div class="cell" style="left:848px;top:587.6px">09-2023</div>
<div class="cell r" style="right:824px;top:587.6px">2.00</div>
<div class="cell r" style="right:712px;top:587.6px">0.00</div>
<div class="cell lnk" style="left:1160px;top:587.6px">00009305</div>
<div class="cell r" style="right:453px;top:587.6px">9/15/2023</div>
<div class="abs" style="left:259px;top:611px;width:1151px;height:31px;background:#f7fbfe"></div>
<div class="abs" style="left:259px;top:642px;width:27px;height:1px;background:#e2edf8"></div>
<div class="abs" style="left:287px;top:642px;width:27px;height:1px;background:#e2edf8"></div>
<div class="abs" style="left:315px;top:642px;width:156px;height:1px;background:#e2edf8"></div>
<div class="abs" style="left:472px;top:642px;width:157px;height:1px;background:#e2edf8"></div>
<div class="abs" style="left:630px;top:642px;width:107px;height:1px;background:#e2edf8"></div>
<div class="abs" style="left:738px;top:642px;width:100px;height:1px;background:#e2edf8"></div>
<div class="abs" style="left:839px;top:642px;width:86px;height:1px;background:#e2edf8"></div>
<div class="abs" style="left:926px;top:642px;width:111px;height:1px;background:#e2edf8"></div>
<div class="abs" style="left:1038px;top:642px;width:112px;height:1px;background:#e2edf8"></div>
<div class="abs" style="left:1151px;top:642px;width:156px;height:1px;background:#e2edf8"></div>
<div class="abs" style="left:1308px;top:642px;width:102px;height:1px;background:#e2edf8"></div>
<div class="abs" style="left:241px;top:642px;width:17px;height:1px;background:#dcdfe3"></div>
<svg class="ic" style="left:264px;top:614px" width="20" height="26" viewBox="0 0 20 26"><path d="M14.8 11V15A4 4 0 0 1 6.8 15V7.5A2.75 2.75 0 0 1 12.3 7.5V14.5A1.5 1.5 0 0 1 9.3 14.5V10" fill="none" stroke="#1a1a1a" stroke-width="1.15"/></svg>
<svg class="ic" style="left:294px;top:614px" width="20" height="26" viewBox="0 0 20 26"><path d="M3.8 5.6H10.2L14.1 9.5V18.1H3.8Z" fill="none" stroke="#1a1a1a" stroke-width="1.2"/></svg>
<div class="cell" style="left:324px;top:620.6px">Receipt</div>
<div class="cell lnk" style="left:481px;top:620.6px">002311</div>
<div class="cell" style="left:639px;top:620.6px">Released</div>
<div class="cell r" style="right:1023px;top:620.6px">9/15/2023</div>
<div class="cell" style="left:848px;top:620.6px">09-2023</div>
<div class="cell r" style="right:824px;top:620.6px">90.00</div>
<div class="cell r" style="right:712px;top:620.6px">0.00</div>
<div class="cell lnk" style="left:1160px;top:620.6px">00009303</div>
<div class="cell r" style="right:453px;top:620.6px">9/15/2023</div>
<div class="abs" style="left:259px;top:643px;width:1151px;height:32px;background:#ffffff"></div>
<div class="abs" style="left:259px;top:675px;width:27px;height:1px;background:#e2edf8"></div>
<div class="abs" style="left:287px;top:675px;width:27px;height:1px;background:#e2edf8"></div>
<div class="abs" style="left:315px;top:675px;width:156px;height:1px;background:#e2edf8"></div>
<div class="abs" style="left:472px;top:675px;width:157px;height:1px;background:#e2edf8"></div>
<div class="abs" style="left:630px;top:675px;width:107px;height:1px;background:#e2edf8"></div>
<div class="abs" style="left:738px;top:675px;width:100px;height:1px;background:#e2edf8"></div>
<div class="abs" style="left:839px;top:675px;width:86px;height:1px;background:#e2edf8"></div>
<div class="abs" style="left:926px;top:675px;width:111px;height:1px;background:#e2edf8"></div>
<div class="abs" style="left:1038px;top:675px;width:112px;height:1px;background:#e2edf8"></div>
<div class="abs" style="left:1151px;top:675px;width:156px;height:1px;background:#e2edf8"></div>
<div class="abs" style="left:1308px;top:675px;width:102px;height:1px;background:#e2edf8"></div>
<div class="abs" style="left:241px;top:675px;width:17px;height:1px;background:#dcdfe3"></div>
<svg class="ic" style="left:264px;top:646px" width="20" height="26" viewBox="0 0 20 26"><path d="M14.8 11V15A4 4 0 0 1 6.8 15V7.5A2.75 2.75 0 0 1 12.3 7.5V14.5A1.5 1.5 0 0 1 9.3 14.5V10" fill="none" stroke="#1a1a1a" stroke-width="1.15"/></svg>
<svg class="ic" style="left:294px;top:646px" width="20" height="26" viewBox="0 0 20 26"><path d="M3.8 5.6H10.2L14.1 9.5V18.1H3.8Z" fill="none" stroke="#1a1a1a" stroke-width="1.2"/></svg>
<div class="cell" style="left:324px;top:652.6px">Receipt</div>
<div class="cell lnk" style="left:481px;top:652.6px">002310</div>
<div class="cell" style="left:639px;top:652.6px">Released</div>
<div class="cell r" style="right:1023px;top:652.6px">9/15/2023</div>
<div class="cell" style="left:848px;top:652.6px">09-2023</div>
<div class="cell r" style="right:824px;top:652.6px">1.00</div>
<div class="cell r" style="right:712px;top:652.6px">0.00</div>
<div class="cell lnk" style="left:1160px;top:652.6px">00009301</div>
<div class="cell r" style="right:453px;top:652.6px">9/15/2023</div>
<div class="abs" style="left:259px;top:676px;width:1151px;height:31px;background:#f7fbfe"></div>
<div class="abs" style="left:259px;top:707px;width:27px;height:1px;background:#e2edf8"></div>
<div class="abs" style="left:287px;top:707px;width:27px;height:1px;background:#e2edf8"></div>
<div class="abs" style="left:315px;top:707px;width:156px;height:1px;background:#e2edf8"></div>
<div class="abs" style="left:472px;top:707px;width:157px;height:1px;background:#e2edf8"></div>
<div class="abs" style="left:630px;top:707px;width:107px;height:1px;background:#e2edf8"></div>
<div class="abs" style="left:738px;top:707px;width:100px;height:1px;background:#e2edf8"></div>
<div class="abs" style="left:839px;top:707px;width:86px;height:1px;background:#e2edf8"></div>
<div class="abs" style="left:926px;top:707px;width:111px;height:1px;background:#e2edf8"></div>
<div class="abs" style="left:1038px;top:707px;width:112px;height:1px;background:#e2edf8"></div>
<div class="abs" style="left:1151px;top:707px;width:156px;height:1px;background:#e2edf8"></div>
<div class="abs" style="left:1308px;top:707px;width:102px;height:1px;background:#e2edf8"></div>
<div class="abs" style="left:241px;top:707px;width:17px;height:1px;background:#dcdfe3"></div>
<svg class="ic" style="left:264px;top:679px" width="20" height="26" viewBox="0 0 20 26"><path d="M14.8 11V15A4 4 0 0 1 6.8 15V7.5A2.75 2.75 0 0 1 12.3 7.5V14.5A1.5 1.5 0 0 1 9.3 14.5V10" fill="none" stroke="#1a1a1a" stroke-width="1.15"/></svg>
<svg class="ic" style="left:294px;top:679px" width="20" height="26" viewBox="0 0 20 26"><path d="M3.8 5.6H10.2L14.1 9.5V18.1H3.8Z" fill="none" stroke="#1a1a1a" stroke-width="1.2"/></svg>
<div class="cell" style="left:324px;top:685.6px">Receipt</div>
<div class="cell lnk" style="left:481px;top:685.6px">002309</div>
<div class="cell" style="left:639px;top:685.6px">Released</div>
<div class="cell r" style="right:1023px;top:685.6px">9/15/2023</div>
<div class="cell" style="left:848px;top:685.6px">09-2023</div>
<div class="cell r" style="right:824px;top:685.6px">1.00</div>
<div class="cell r" style="right:712px;top:685.6px">0.00</div>
<div class="cell lnk" style="left:1160px;top:685.6px">00009298</div>
<div class="cell r" style="right:453px;top:685.6px">9/15/2023</div>
<div class="abs" style="left:259px;top:708px;width:1151px;height:32px;background:#ffffff"></div>
<div class="abs" style="left:259px;top:740px;width:27px;height:1px;background:#e2edf8"></div>
<div class="abs" style="left:287px;top:740px;width:27px;height:1px;background:#e2edf8"></div>
<div class="abs" style="left:315px;top:740px;width:156px;height:1px;background:#e2edf8"></div>
<div class="abs" style="left:472px;top:740px;width:157px;height:1px;background:#e2edf8"></div>
<div class="abs" style="left:630px;top:740px;width:107px;height:1px;background:#e2edf8"></div>
<div class="abs" style="left:738px;top:740px;width:100px;height:1px;background:#e2edf8"></div>
<div class="abs" style="left:839px;top:740px;width:86px;height:1px;background:#e2edf8"></div>
<div class="abs" style="left:926px;top:740px;width:111px;height:1px;background:#e2edf8"></div>
<div class="abs" style="left:1038px;top:740px;width:112px;height:1px;background:#e2edf8"></div>
<div class="abs" style="left:1151px;top:740px;width:156px;height:1px;background:#e2edf8"></div>
<div class="abs" style="left:1308px;top:740px;width:102px;height:1px;background:#e2edf8"></div>
<div class="abs" style="left:241px;top:740px;width:17px;height:1px;background:#dcdfe3"></div>
<svg class="ic" style="left:264px;top:711px" width="20" height="26" viewBox="0 0 20 26"><path d="M14.8 11V15A4 4 0 0 1 6.8 15V7.5A2.75 2.75 0 0 1 12.3 7.5V14.5A1.5 1.5 0 0 1 9.3 14.5V10" fill="none" stroke="#1a1a1a" stroke-width="1.15"/></svg>
<svg class="ic" style="left:294px;top:711px" width="20" height="26" viewBox="0 0 20 26"><path d="M3.8 5.6H10.2L14.1 9.5V18.1H3.8Z" fill="none" stroke="#1a1a1a" stroke-width="1.2"/></svg>
<div class="cell" style="left:324px;top:717.6px">Receipt</div>
<div class="cell lnk" style="left:481px;top:717.6px">002308</div>
<div class="cell" style="left:639px;top:717.6px">Released</div>
<div class="cell r" style="right:1023px;top:717.6px">9/14/2023</div>
<div class="cell" style="left:848px;top:717.6px">09-2023</div>
<div class="cell r" style="right:824px;top:717.6px">1.00</div>
<div class="cell r" style="right:712px;top:717.6px">0.00</div>
<div class="cell lnk" style="left:1160px;top:717.6px">00009291</div>
<div class="cell r" style="right:453px;top:717.6px">9/14/2023</div>
<div class="abs" style="left:259px;top:741px;width:1151px;height:31px;background:#f7fbfe"></div>
<div class="abs" style="left:259px;top:772px;width:27px;height:1px;background:#e2edf8"></div>
<div class="abs" style="left:287px;top:772px;width:27px;height:1px;background:#e2edf8"></div>
<div class="abs" style="left:315px;top:772px;width:156px;height:1px;background:#e2edf8"></div>
<div class="abs" style="left:472px;top:772px;width:157px;height:1px;background:#e2edf8"></div>
<div class="abs" style="left:630px;top:772px;width:107px;height:1px;background:#e2edf8"></div>
<div class="abs" style="left:738px;top:772px;width:100px;height:1px;background:#e2edf8"></div>
<div class="abs" style="left:839px;top:772px;width:86px;height:1px;background:#e2edf8"></div>
<div class="abs" style="left:926px;top:772px;width:111px;height:1px;background:#e2edf8"></div>
<div class="abs" style="left:1038px;top:772px;width:112px;height:1px;background:#e2edf8"></div>
<div class="abs" style="left:1151px;top:772px;width:156px;height:1px;background:#e2edf8"></div>
<div class="abs" style="left:1308px;top:772px;width:102px;height:1px;background:#e2edf8"></div>
<div class="abs" style="left:241px;top:772px;width:17px;height:1px;background:#dcdfe3"></div>
<svg class="ic" style="left:264px;top:744px" width="20" height="26" viewBox="0 0 20 26"><path d="M14.8 11V15A4 4 0 0 1 6.8 15V7.5A2.75 2.75 0 0 1 12.3 7.5V14.5A1.5 1.5 0 0 1 9.3 14.5V10" fill="none" stroke="#1a1a1a" stroke-width="1.15"/></svg>
<svg class="ic" style="left:294px;top:744px" width="20" height="26" viewBox="0 0 20 26"><path d="M3.8 5.6H10.2L14.1 9.5V18.1H3.8Z" fill="none" stroke="#1a1a1a" stroke-width="1.2"/></svg>
<div class="cell" style="left:324px;top:750.6px">Receipt</div>
<div class="cell lnk" style="left:481px;top:750.6px">002307</div>
<div class="cell" style="left:639px;top:750.6px">Released</div>
<div class="cell r" style="right:1023px;top:750.6px">9/14/2023</div>
<div class="cell" style="left:848px;top:750.6px">09-2023</div>
<div class="cell r" style="right:824px;top:750.6px">1.00</div>
<div class="cell r" style="right:712px;top:750.6px">0.00</div>
<div class="cell lnk" style="left:1160px;top:750.6px">00009289</div>
<div class="cell r" style="right:453px;top:750.6px">9/14/2023</div>
<div class="abs" style="left:259px;top:773px;width:1151px;height:32px;background:#ffffff"></div>
<div class="abs" style="left:259px;top:805px;width:27px;height:1px;background:#e2edf8"></div>
<div class="abs" style="left:287px;top:805px;width:27px;height:1px;background:#e2edf8"></div>
<div class="abs" style="left:315px;top:805px;width:156px;height:1px;background:#e2edf8"></div>
<div class="abs" style="left:472px;top:805px;width:157px;height:1px;background:#e2edf8"></div>
<div class="abs" style="left:630px;top:805px;width:107px;height:1px;background:#e2edf8"></div>
<div class="abs" style="left:738px;top:805px;width:100px;height:1px;background:#e2edf8"></div>
<div class="abs" style="left:839px;top:805px;width:86px;height:1px;background:#e2edf8"></div>
<div class="abs" style="left:926px;top:805px;width:111px;height:1px;background:#e2edf8"></div>
<div class="abs" style="left:1038px;top:805px;width:112px;height:1px;background:#e2edf8"></div>
<div class="abs" style="left:1151px;top:805px;width:156px;height:1px;background:#e2edf8"></div>
<div class="abs" style="left:1308px;top:805px;width:102px;height:1px;background:#e2edf8"></div>
<div class="abs" style="left:241px;top:805px;width:17px;height:1px;background:#dcdfe3"></div>
<svg class="ic" style="left:264px;top:776px" width="20" height="26" viewBox="0 0 20 26"><path d="M14.8 11V15A4 4 0 0 1 6.8 15V7.5A2.75 2.75 0 0 1 12.3 7.5V14.5A1.5 1.5 0 0 1 9.3 14.5V10" fill="none" stroke="#1a1a1a" stroke-width="1.15"/></svg>
<svg class="ic" style="left:294px;top:776px" width="20" height="26" viewBox="0 0 20 26"><path d="M3.8 5.6H10.2L14.1 9.5V18.1H3.8Z" fill="none" stroke="#1a1a1a" stroke-width="1.2"/></svg>
<div class="cell" style="left:324px;top:782.6px">Receipt</div>
<div class="cell lnk" style="left:481px;top:782.6px">002306</div>
<div class="cell" style="left:639px;top:782.6px">Released</div>
<div class="cell r" style="right:1023px;top:782.6px">9/14/2023</div>
<div class="cell" style="left:848px;top:782.6px">09-2023</div>
<div class="cell r" style="right:824px;top:782.6px">400.00</div>
<div class="cell r" style="right:712px;top:782.6px">0.00</div>
<div class="cell lnk" style="left:1160px;top:782.6px">00009287</div>
<div class="cell r" style="right:453px;top:782.6px">9/14/2023</div>
<div class="abs" style="left:259px;top:806px;width:1151px;height:31px;background:#f7fbfe"></div>
<div class="abs" style="left:259px;top:837px;width:27px;height:1px;background:#e2edf8"></div>
<div class="abs" style="left:287px;top:837px;width:27px;height:1px;background:#e2edf8"></div>
<div class="abs" style="left:315px;top:837px;width:156px;height:1px;background:#e2edf8"></div>
<div class="abs" style="left:472px;top:837px;width:157px;height:1px;background:#e2edf8"></div>
<div class="abs" style="left:630px;top:837px;width:107px;height:1px;background:#e2edf8"></div>
<div class="abs" style="left:738px;top:837px;width:100px;height:1px;background:#e2edf8"></div>
<div class="abs" style="left:839px;top:837px;width:86px;height:1px;background:#e2edf8"></div>
<div class="abs" style="left:926px;top:837px;width:111px;height:1px;background:#e2edf8"></div>
<div class="abs" style="left:1038px;top:837px;width:112px;height:1px;background:#e2edf8"></div>
<div class="abs" style="left:1151px;top:837px;width:156px;height:1px;background:#e2edf8"></div>
<div class="abs" style="left:1308px;top:837px;width:102px;height:1px;background:#e2edf8"></div>
<div class="abs" style="left:241px;top:837px;width:17px;height:1px;background:#dcdfe3"></div>
<svg class="ic" style="left:264px;top:809px" width="20" height="26" viewBox="0 0 20 26"><path d="M14.8 11V15A4 4 0 0 1 6.8 15V7.5A2.75 2.75 0 0 1 12.3 7.5V14.5A1.5 1.5 0 0 1 9.3 14.5V10" fill="none" stroke="#1a1a1a" stroke-width="1.15"/></svg>
<svg class="ic" style="left:294px;top:809px" width="20" height="26" viewBox="0 0 20 26"><path d="M3.8 5.6H10.2L14.1 9.5V18.1H3.8Z" fill="none" stroke="#1a1a1a" stroke-width="1.2"/></svg>
<div class="cell" style="left:324px;top:815.6px">Receipt</div>
<div class="cell lnk" style="left:481px;top:815.6px">002305</div>
<div class="cell" style="left:639px;top:815.6px">Released</div>
<div class="cell r" style="right:1023px;top:815.6px">9/13/2023</div>
<div class="cell" style="left:848px;top:815.6px">09-2023</div>
<div class="cell r" style="right:824px;top:815.6px">1.00</div>
<div class="cell r" style="right:712px;top:815.6px">0.00</div>
<div class="cell lnk" style="left:1160px;top:815.6px">00009286</div>
<div class="cell r" style="right:453px;top:815.6px">9/13/2023</div>
<div class="abs" style="left:259px;top:838px;width:1151px;height:32px;background:#ffffff"></div>
<div class="abs" style="left:259px;top:870px;width:27px;height:1px;background:#d5d8dc"></div>
<div class="abs" style="left:287px;top:870px;width:27px;height:1px;background:#d5d8dc"></div>
<div class="abs" style="left:315px;top:870px;width:156px;height:1px;background:#d5d8dc"></div>
<div class="abs" style="left:472px;top:870px;width:157px;height:1px;background:#d5d8dc"></div>
<div class="abs" style="left:630px;top:870px;width:107px;height:1px;background:#d5d8dc"></div>
<div class="abs" style="left:738px;top:870px;width:100px;height:1px;background:#d5d8dc"></div>
<div class="abs" style="left:839px;top:870px;width:86px;height:1px;background:#d5d8dc"></div>
<div class="abs" style="left:926px;top:870px;width:111px;height:1px;background:#d5d8dc"></div>
<div class="abs" style="left:1038px;top:870px;width:112px;height:1px;background:#d5d8dc"></div>
<div class="abs" style="left:1151px;top:870px;width:156px;height:1px;background:#d5d8dc"></div>
<div class="abs" style="left:1308px;top:870px;width:102px;height:1px;background:#d5d8dc"></div>
<div class="abs" style="left:241px;top:870px;width:17px;height:1px;background:#dcdfe3"></div>
<svg class="ic" style="left:264px;top:841px" width="20" height="26" viewBox="0 0 20 26"><path d="M14.8 11V15A4 4 0 0 1 6.8 15V7.5A2.75 2.75 0 0 1 12.3 7.5V14.5A1.5 1.5 0 0 1 9.3 14.5V10" fill="none" stroke="#1a1a1a" stroke-width="1.15"/></svg>
<svg class="ic" style="left:294px;top:841px" width="20" height="26" viewBox="0 0 20 26"><path d="M3.8 5.6H10.2L14.1 9.5V18.1H3.8Z" fill="none" stroke="#1a1a1a" stroke-width="1.2"/></svg>
<div class="cell" style="left:324px;top:847.6px">Receipt</div>
<div class="cell lnk" style="left:481px;top:847.6px">002304</div>
<div class="cell" style="left:639px;top:847.6px">Released</div>
<div class="cell r" style="right:1023px;top:847.6px">9/13/2023</div>
<div class="cell" style="left:848px;top:847.6px">09-2023</div>
<div class="cell r" style="right:824px;top:847.6px">1.00</div>
<div class="cell r" style="right:712px;top:847.6px">0.00</div>
<div class="cell lnk" style="left:1160px;top:847.6px">00009284</div>
<div class="cell r" style="right:453px;top:847.6px">9/13/2023</div>
<div class="abs" style="left:255px;top:381px;width:162px;height:39px"></div>
<div class="abs" style="left:255px;top:381px;width:1162px;height:39px;border:3px solid #ff3b3d;filter:drop-shadow(1px 3px 3px rgba(0,0,0,.42))"></div>
</body></html>
